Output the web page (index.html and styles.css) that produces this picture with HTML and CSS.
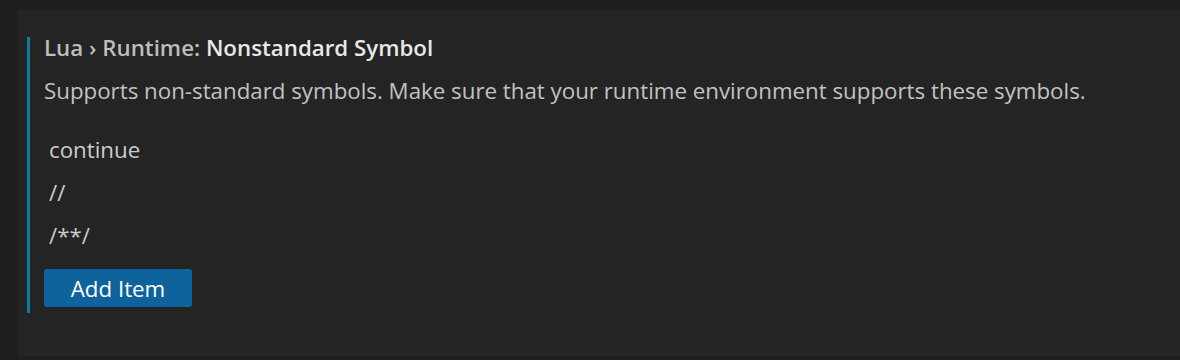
FILE: index.html
```html
<!DOCTYPE html>
<html>
<head>
    <title>Lua Runtime Setting</title>
    <link rel="stylesheet" href="styles.css">
</head>
<body>

<div class="panel">
    <div class="setting">
        <div class="title"><span class="category">Lua › Runtime: </span><span class="label">Nonstandard Symbol</span></div>
        <div class="description">Supports non-standard symbols. Make sure that your runtime environment supports these symbols.</div>
        <div class="list">
            <div class="list-item">continue</div>
            <div class="list-item">//</div>
            <div class="list-item">/**/</div>
        </div>
        <button class="add-button">Add Item</button>
    </div>
</div>

</body>
</html>
```

FILE: styles.css
```css
body { margin: 0; background-color: #1f1f1f; font-family: "Open Sans", "Noto Sans", sans-serif; height: 360px; padding-top: 10px; box-sizing: border-box; }
.panel { margin-left: 18px; height: 346px; background-color: #232423; padding-top: 27px; box-sizing: border-box; }
.setting { margin-left: 9px; border-left: 3px solid #107ba0; padding-left: 14px; padding-bottom: 6px; }
.title { font-size: 22.3px; font-weight: 600; line-height: 22px; color: #bdbdbd; }
.title .label { color: #e8e8e8; }
.description { font-size: 22.3px; line-height: 26px; color: #c2c2c2; margin-top: 19px; }
.list { margin-top: 24px; }
.list-item { font-size: 22.3px; line-height: 25px; color: #cccccc; padding: 9px 5px; }
.add-button { display: block; margin-top: 12px; background-color: #0e639c; color: #ffffff; border: none; border-radius: 3px; font-family: inherit; font-size: 22.3px; width: 148px; height: 38px; padding: 0; }
```
